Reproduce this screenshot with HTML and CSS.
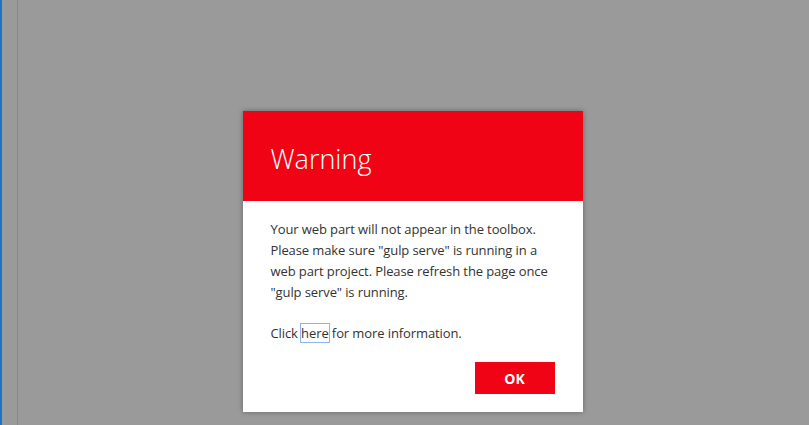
FILE: index.html
```html
<!DOCTYPE html>
<html lang="en">
<head>
    <meta charset="UTF-8">
    <title>Workbench</title>
    <link rel="stylesheet" href="styles.css">
</head>
<body>
    <div class="workbench">
        <div class="edge"></div>
        <div class="rail"></div>
        <div class="canvas"></div>
    </div>

    <div class="overlay">
        <div class="dialog">
            <div class="dialog-header">
                <h1>Warning</h1>
            </div>
            <div class="dialog-body">
                <p>Your web part will not appear in the toolbox. Please make sure "gulp serve" is running in a web part project. Please refresh the page once "gulp serve" is running.</p>
                <p>Click <a href="#" class="focused">here</a> for more information.</p>
                <div class="actions">
                    <button>OK</button>
                </div>
            </div>
        </div>
    </div>
</body>
</html>
```

FILE: styles.css
```css
html, body {
    margin: 0;
    padding: 0;
    height: 100%;
}

body {
    font-family: "Open Sans", "Noto Sans", sans-serif;
    background: #9a9a9a;
    overflow: hidden;
}

.workbench {
    display: flex;
    height: 100%;
}

.edge {
    width: 2px;
    background: #1c74c4;
}

.rail {
    width: 15px;
    border-right: 1px solid #8a8a8a;
}

.canvas {
    flex: 1;
}

.overlay {
    position: absolute;
    top: 0;
    left: 0;
    right: 0;
    bottom: 0;
    display: flex;
    justify-content: center;
    padding-top: 111px;
    padding-left: 16px;
}

.dialog {
    width: 340px;
    height: 301px;
    background: #fff;
    box-shadow: 0 0 5px rgba(0,0,0,0.35);
}

.dialog-header {
    background: #ef0314;
    height: 90px;
    padding: 0 28px;
    display: flex;
    align-items: center;
}

.dialog-header h1 {
    margin: 0;
    color: #fff;
    font-weight: 300;
    font-size: 27px;
    margin-top: 5px;
}

.dialog-body {
    padding: 18px 28px 0 28px;
    color: #333;
    font-size: 13px;
    letter-spacing: -0.1px;
    line-height: 21px;
}

.dialog-body p {
    margin: 0 0 20px 0;
}

.dialog-body a {
    color: #333;
    text-decoration: none;
}

.focused {
    outline: 1px solid #8fb4f0;
    outline-offset: 0;
}

.actions {
    display: flex;
    justify-content: flex-end;
    margin-top: -2px;
}

button {
    width: 80px;
    height: 32px;
    background: #ef0314;
    color: #fff;
    border: none;
    font-family: inherit;
    font-weight: 700;
    font-size: 14px;
    letter-spacing: 0;
}
```
